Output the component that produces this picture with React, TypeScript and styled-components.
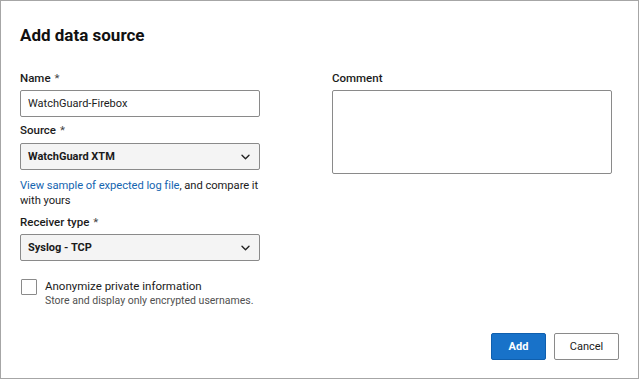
import React from "react";
import styled, { createGlobalStyle } from "styled-components";

const Global = createGlobalStyle`
  html, body { margin: 0; padding: 0; background: #ffffff; }
  body { font-family: Roboto, "Noto Sans", sans-serif; color: #1b1b1b; }
  * { box-sizing: border-box; }
`;

const Frame = styled.div`
  width: 639px;
  height: 379px;
  border: 1px solid #a6a6a6;
  display: flex;
  flex-direction: column;
  padding: 23px 19px 18px 19px;
`;

const Title = styled.h1`
  margin: 0;
  font-size: 17px;
  line-height: 22px;
  font-weight: 700;
  color: #111111;
`;

const Columns = styled.div`
  display: flex;
  gap: 72px;
  margin-top: 24px;
`;

const Column = styled.div<{ $width: number }>`
  width: ${(p) => p.$width}px;
  display: flex;
  flex-direction: column;
`;

const Label = styled.label<{ $gap?: number }>`
  font-size: 11.5px;
  line-height: 16px;
  font-weight: 500;
  color: #1b1b1b;
  margin-bottom: ${(p) => p.$gap ?? 4}px;
  span { font-weight: 400; margin-left: 4px; color: #444; }
`;

const TextInput = styled.input`
  width: 240px;
  height: 27px;
  border: 1px solid #8a8a8a;
  border-radius: 2px;
  padding: 0 7px;
  font-family: inherit;
  font-size: 11px;
  color: #1b1b1b;
  background: #fff;
  margin-bottom: 5px;
  outline: none;
`;

const SelectBox = styled.div<{ $after: number }>`
  width: 240px;
  height: 27px;
  border: 1px solid #8a8a8a;
  border-radius: 2px;
  background: #f4f4f4;
  display: flex;
  align-items: center;
  justify-content: space-between;
  padding: 0 9px 0 7px;
  font-size: 11px;
  font-weight: 700;
  color: #1b1b1b;
  margin-bottom: ${(p) => p.$after}px;
`;

const Help = styled.p`
  margin: 0 0 6px 0;
  font-size: 11.2px;
  line-height: 15px;
  letter-spacing: -0.05px;
  color: #1b1b1b;
  a { color: #1565b0; text-decoration: none; }
`;

const TextArea = styled.textarea`
  width: 280px;
  height: 84px;
  border: 1px solid #8a8a8a;
  border-radius: 2px;
  resize: none;
  outline: none;
  font-family: inherit;
`;

const CheckRow = styled.div`
  display: flex;
  align-items: flex-start;
  gap: 8px;
  margin-top: 18px;
  margin-left: 1px;
`;

const Box = styled.div`
  width: 16px;
  height: 16px;
  border: 1px solid #8a8a8a;
  border-radius: 1px;
  flex-shrink: 0;
  margin-top: 0px;
`;

const CheckText = styled.div`
  display: flex;
  flex-direction: column;
`;

const CheckTitle = styled.div`
  font-size: 11.5px;
  line-height: 15px;
  color: #1b1b1b;
`;

const CheckSub = styled.div`
  font-size: 10.5px;
  line-height: 14px;
  color: #505050;
`;

const Footer = styled.div`
  margin-top: auto;
  display: flex;
  justify-content: flex-end;
  gap: 8px;
`;

const Button = styled.button<{ $primary?: boolean }>`
  height: 27px;
  width: ${(p) => (p.$primary ? 55 : 65)}px;
  border-radius: 2px;
  border: 1px solid ${(p) => (p.$primary ? "#0f5fae" : "#8a8a8a")};
  background: ${(p) => (p.$primary ? "#1872c9" : "#ffffff")};
  color: ${(p) => (p.$primary ? "#ffffff" : "#1b1b1b")};
  font-family: inherit;
  font-size: 11px;
  font-weight: ${(p) => (p.$primary ? 700 : 400)};
  padding: 0;
  cursor: pointer;
`;

const Chevron = () => (
  <svg width="9" height="6" viewBox="0 0 9 6" fill="none">
    <path d="M1 1.2l3.5 3.5 3.5-3.5" stroke="#222" strokeWidth="1.4" strokeLinecap="round" strokeLinejoin="round" />
  </svg>
);

export default function App() {
  return (
    <>
      <Global />
      <Frame>
        <Title>Add data source</Title>
        <Columns>
          <Column $width={240}>
            <Label>Name<span>*</span></Label>
            <TextInput defaultValue="WatchGuard-Firebox" />
            <Label $gap={5}>Source<span>*</span></Label>
            <SelectBox $after={8}>
              WatchGuard XTM
              <Chevron />
            </SelectBox>
            <Help>
              <a href="#">View sample of expected log file</a>, and compare it with yours
            </Help>
            <Label>Receiver type<span>*</span></Label>
            <SelectBox $after={0}>
              Syslog - TCP
              <Chevron />
            </SelectBox>
          </Column>
          <Column $width={280}>
            <Label>Comment</Label>
            <TextArea />
          </Column>
        </Columns>
        <CheckRow>
          <Box />
          <CheckText>
            <CheckTitle>Anonymize private information</CheckTitle>
            <CheckSub>Store and display only encrypted usernames.</CheckSub>
          </CheckText>
        </CheckRow>
        <Footer>
          <Button $primary>Add</Button>
          <Button>Cancel</Button>
        </Footer>
      </Frame>
    </>
  );
}
